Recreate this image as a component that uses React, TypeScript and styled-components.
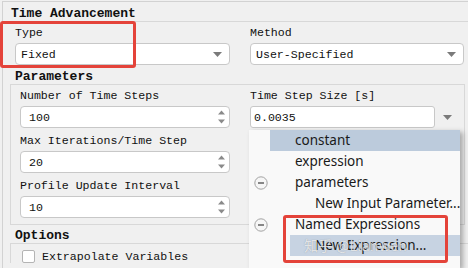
import React from 'react';
import styled, { createGlobalStyle } from 'styled-components';

const Global = createGlobalStyle`
  html, body { margin: 0; padding: 0; background: #f0f0f0; }
  #root { width: 468px; height: 268px; }
`;

const Page = styled.div`
  position: relative;
  width: 468px;
  height: 268px;
  overflow: hidden;
  box-sizing: border-box;
  padding-top: 1px;
  background: #f0f0f0;
  font-family: "Liberation Mono", "DejaVu Sans Mono", monospace;
  color: #111;
`;

const Section = styled.div`
  height: 100%;
  margin-left: 2px;
  border-left: 1px solid #d2d2d2;
  border-top: 1px solid #d2d2d2;
`;

const SectionTitle = styled.div`
  height: 14px;
  line-height: 14px;
  padding: 5px 0 0 8px;
  font-size: 13px;
  font-weight: bold;
  border-bottom: 1px solid #d8d8d8;
`;

const TopRow = styled.div`
  display: grid;
  grid-template-columns: 215px 214px;
  column-gap: 20px;
  padding: 4px 0 0 12px;
`;

const Field = styled.div`
  display: flex;
  flex-direction: column;
`;

const Label = styled.div`
  height: 14px;
  line-height: 14px;
  font-size: 11.6px;
  white-space: nowrap;
`;

const Box = styled.div<{ $kind?: 'select' | 'spin' | 'text' }>`
  margin-top: 3px;
  height: 22px;
  box-sizing: border-box;
  display: flex;
  align-items: center;
  justify-content: space-between;
  padding: ${(p) =>
    p.$kind === 'spin' ? '0 3px 0 8px' : p.$kind === 'text' ? '0 4px 0 3px' : '0 7px 0 5px'};
  background: #fff;
  border: 1px solid #c8c8c8;
  border-radius: ${(p) => (p.$kind === 'text' ? '3px' : '4px')};
  font-size: 11.6px;
`;

const SubTitle = styled.div<{ $top?: number }>`
  height: 14px;
  line-height: 14px;
  margin: ${(p) => p.$top ?? 5}px 0 0 12px;
  font-size: 13px;
  font-weight: bold;
`;

const GroupBox = styled.div`
  margin: 0 3px 0 7px;
  border: 1px solid #d8d8d8;
`;

const ParamGrid = styled.div`
  display: grid;
  grid-template-columns: 210px 210px;
  column-gap: 20px;
  row-gap: 6px;
  padding: 4px 0 6px 9px;
`;

const InputLine = styled.div`
  display: flex;
  align-items: flex-end;
`;

const TextInput = styled(Box)`
  width: 185px;
  flex: none;
`;

const DropBtn = styled.div`
  width: 25px;
  height: 22px;
  display: flex;
  align-items: center;
  justify-content: center;
`;

const OptionsBox = styled.div`
  margin-left: 7px;
  border-left: 1px solid #d8d8d8;
  border-top: 1px solid #d8d8d8;
  padding: 6px 0 0 11px;
  display: flex;
  align-items: center;
`;

const Check = styled.div`
  width: 13px;
  height: 13px;
  box-sizing: border-box;
  background: #fff;
  border: 1px solid #b4b4b4;
  border-radius: 2px;
`;

const CheckLabel = styled.span`
  margin-left: 7px;
  font-size: 11.6px;
`;

const Popup = styled.div`
  position: absolute;
  left: 249px;
  top: 130px;
  width: 211px;
  bottom: 0;
  background: #f9f9f9;
  box-shadow: 3px 2px 5px rgba(0, 0, 0, 0.3);
  font-family: "Noto Sans", "Open Sans", sans-serif;
  font-size: 13.5px;
  color: #1a1a1a;
`;

const TreeRow = styled.div`
  display: flex;
  height: 21px;
`;

const ToggleSlot = styled.div`
  width: 21px;
  flex: none;
  box-sizing: border-box;
  padding-left: 5px;
  display: flex;
  align-items: center;
`;

const Indent = styled.div<{ $level: number }>`
  width: ${(p) => p.$level * 20}px;
  flex: none;
`;

const ItemText = styled.div<{ $selected?: boolean; $soft?: boolean }>`
  flex: 1;
  position: relative;
  padding-left: 25px;
  line-height: 21px;
  white-space: nowrap;
  background: ${(p) => (p.$selected ? (p.$soft ? '#c7d3e2' : '#bccbdc') : 'transparent')};
`;

const Watermark = styled.span`
  position: absolute;
  left: 14px;
  top: 0;
  line-height: 21px;
  font-family: "Noto Sans CJK SC", "Noto Sans", sans-serif;
  font-size: 14px;
  color: rgba(255, 255, 255, 0.72);
  text-shadow: 0 0 1px rgba(90, 90, 90, 0.5);
  letter-spacing: 0.3px;
`;

const RedBox = styled.div<{ $x: number; $y: number; $w: number; $h: number }>`
  position: absolute;
  left: ${(p) => p.$x}px;
  top: ${(p) => p.$y}px;
  width: ${(p) => p.$w}px;
  height: ${(p) => p.$h}px;
  box-sizing: border-box;
  border: 3.5px solid #e4433a;
  border-radius: 3px;
  pointer-events: none;
`;

const Arrow = () => (
  <svg width="9" height="5" viewBox="0 0 9 5">
    <path d="M0 0 H9 L4.5 5 Z" fill="#7a7a7a" />
  </svg>
);

const Spin = () => (
  <svg width="9" height="14" viewBox="0 0 9 14">
    <path d="M1 4.5 L4.5 0.5 L8 4.5 Z" fill="#8a8a8a" />
    <path d="M1 9.5 L8 9.5 L4.5 13.5 Z" fill="#8a8a8a" />
  </svg>
);

const Minus = () => (
  <svg width="14" height="14" viewBox="0 0 14 14">
    <circle cx="7" cy="7" r="6.2" fill="#f6f6f6" stroke="#a3a3a3" strokeWidth="1" />
    <path d="M4 7 H10" stroke="#4a4a4a" strokeWidth="1.3" />
  </svg>
);

const SpinField = ({ label, value }: { label: string; value: string }) => (
  <Field>
    <Label>{label}</Label>
    <Box $kind="spin">
      <span>{value}</span>
      <Spin />
    </Box>
  </Field>
);

type Item = { text: string; level: number; toggle?: boolean; selected?: boolean; soft?: boolean; mark?: boolean };

const items: Item[] = [
  { text: 'constant', level: 0, selected: true },
  { text: 'expression', level: 0 },
  { text: 'parameters', level: 0, toggle: true },
  { text: 'New Input Parameter...', level: 1 },
  { text: 'Named Expressions', level: 0, toggle: true },
  { text: 'New Expression...', level: 1, selected: true, soft: true, mark: true },
];

export default function App() {
  return (
    <Page>
      <Global />
      <Section>
        <SectionTitle>Time Advancement</SectionTitle>
        <TopRow>
          <Field>
            <Label>Type</Label>
            <Box $kind="select">
              <span>Fixed</span>
              <Arrow />
            </Box>
          </Field>
          <Field>
            <Label>Method</Label>
            <Box $kind="select">
              <span>User-Specified</span>
              <Arrow />
            </Box>
          </Field>
        </TopRow>
        <SubTitle>Parameters</SubTitle>
        <GroupBox>
          <ParamGrid>
            <SpinField label="Number of Time Steps" value="100" />
            <Field>
              <Label>Time Step Size [s]</Label>
              <InputLine>
                <TextInput $kind="text">
                  <span>0.0035</span>
                </TextInput>
                <DropBtn>
                  <Arrow />
                </DropBtn>
              </InputLine>
            </Field>
            <SpinField label="Max Iterations/Time Step" value="20" />
            <div />
            <SpinField label="Profile Update Interval" value="10" />
          </ParamGrid>
        </GroupBox>
        <SubTitle $top={4}>Options</SubTitle>
        <OptionsBox>
          <Check />
          <CheckLabel>Extrapolate Variables</CheckLabel>
        </OptionsBox>
      </Section>

      <Popup>
        {items.map((it) => (
          <TreeRow key={it.text}>
            <ToggleSlot>{it.toggle ? <Minus /> : null}</ToggleSlot>
            <Indent $level={it.level} />
            <ItemText $selected={it.selected} $soft={it.soft}>
              {it.text}
              {it.mark ? <Watermark>知乎 @Lianwen</Watermark> : null}
            </ItemText>
          </TreeRow>
        ))}
      </Popup>

      <RedBox $x={0} $y={21} $w={136} $h={47} />
      <RedBox $x={283} $y={215} $w={165} $h={48} />
    </Page>
  );
}
